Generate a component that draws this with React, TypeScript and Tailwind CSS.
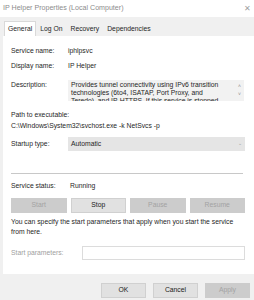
import React from "react";

const font = { fontFamily: '"Liberation Sans", Arial, sans-serif' };

function Btn({ label, disabled, className = "" }: { label: string; disabled?: boolean; className?: string }) {
  return (
    <div
      className={
        "flex h-[15px] items-center justify-center border text-[6.8px] leading-none " +
        (disabled
          ? "border-[#cccccc] bg-[#cccccc] text-[#a3a3a3]"
          : "border-[#d0d0d0] bg-[#e1e1e1] text-[#1a1a1a]") +
        " " +
        className
      }
    >
      {label}
    </div>
  );
}

export default function App() {
  return (
    <div className="flex h-[300px] w-[254px] flex-col overflow-hidden bg-[#f0f0f0] text-[#1f1f1f]" style={font}>
      {/* Title bar */}
      <div className="flex h-[17px] shrink-0 items-center justify-between bg-white pl-[3px] pr-[3px]">
        <span className="text-[7.1px] text-[#8c8c8c]">IP Helper Properties (Local Computer)</span>
        <span className="text-[8px] font-light text-[#a0a0a0]">✕</span>
      </div>

      {/* Tabs */}
      <div className="flex h-[19px] shrink-0 items-end pl-[4px] text-[6.8px]">
        <div className="flex h-[15px] items-center border border-b-0 border-[#d9d9d9] bg-white px-[3px]">General</div>
        <div className="flex h-[14px] items-center px-[4px]">Log On</div>
        <div className="flex h-[14px] items-center px-[4px]">Recovery</div>
        <div className="flex h-[14px] items-center px-[4px]">Dependencies</div>
      </div>

      {/* Panel */}
      <div className="ml-[3px] flex h-[238px] shrink-0 flex-col bg-white pl-[8px] pr-[4px] text-[6.8px]">
        <div className="mt-[10px] flex h-[10px] items-center">
          <span className="w-[57px]">Service name:</span>
          <span>iphlpsvc</span>
        </div>
        <div className="mt-[5px] flex h-[10px] items-center">
          <span className="w-[57px]">Display name:</span>
          <span>IP Helper</span>
        </div>
        <div className="mt-[9px] flex">
          <span className="flex h-[10px] w-[57px] items-center">Description:</span>
          <div className="relative h-[21px] w-[176px] overflow-hidden bg-[#f2f2f2] pl-[3px] pt-[1px] leading-[8px]">
            <div className="w-[155px]">
              Provides tunnel connectivity using IPv6 transition technologies (6to4, ISATAP, Port Proxy, and Teredo), and IP-HTTPS. If this service is stopped, the
            </div>
            <div className="absolute right-[3px] top-[2px] flex flex-col items-center text-[5px] leading-[8px] text-[#8a8a8a]">
              <span>˄</span>
              <span>˅</span>
            </div>
          </div>
        </div>
        <div className="mt-[9px] flex h-[10px] items-center">Path to executable:</div>
        <div className="mt-[1px] flex h-[10px] items-center">C:\Windows\System32\svchost.exe -k NetSvcs -p</div>
        <div className="mt-[6px] flex items-center">
          <span className="w-[57px]">Startup type:</span>
          <div className="flex h-[14px] w-[177px] items-center justify-between bg-[#e5e5e5] pl-[3px] pr-[3px]">
            <span>Automatic</span>
            <span className="text-[5px] text-[#a0a0a0]">⌄</span>
          </div>
        </div>
        <div className="mt-[22px] h-px w-[232px] bg-[#c8c8c8]" />
        <div className="mt-[7px] flex h-[10px] items-center">
          <span className="w-[59px]">Service status:</span>
          <span>Running</span>
        </div>
        <div className="mt-[7px] grid w-[234px] grid-cols-4 gap-[4px]">
          <Btn label="Start" disabled />
          <Btn label="Stop" />
          <Btn label="Pause" disabled />
          <Btn label="Resume" disabled />
        </div>
        <div className="mt-[4px] w-[224px] leading-[10px]">
          You can specify the start parameters that apply when you start the service from here.
        </div>
        <div className="mt-[9px] flex items-center">
          <span className="w-[71px] text-[#a0a0a0]">Start parameters:</span>
          <div className="h-[14px] w-[163px] border border-[#dcdcdc] bg-white" />
        </div>
      </div>

      {/* Footer */}
      <div className="mt-[9px] flex justify-end gap-[7px] pr-[4px]">
        <Btn label="OK" className="w-[45px] border-[#c4c4c4]" />
        <Btn label="Cancel" className="w-[45px] border-[#c4c4c4]" />
        <Btn label="Apply" disabled className="w-[45px]" />
      </div>
    </div>
  );
}
